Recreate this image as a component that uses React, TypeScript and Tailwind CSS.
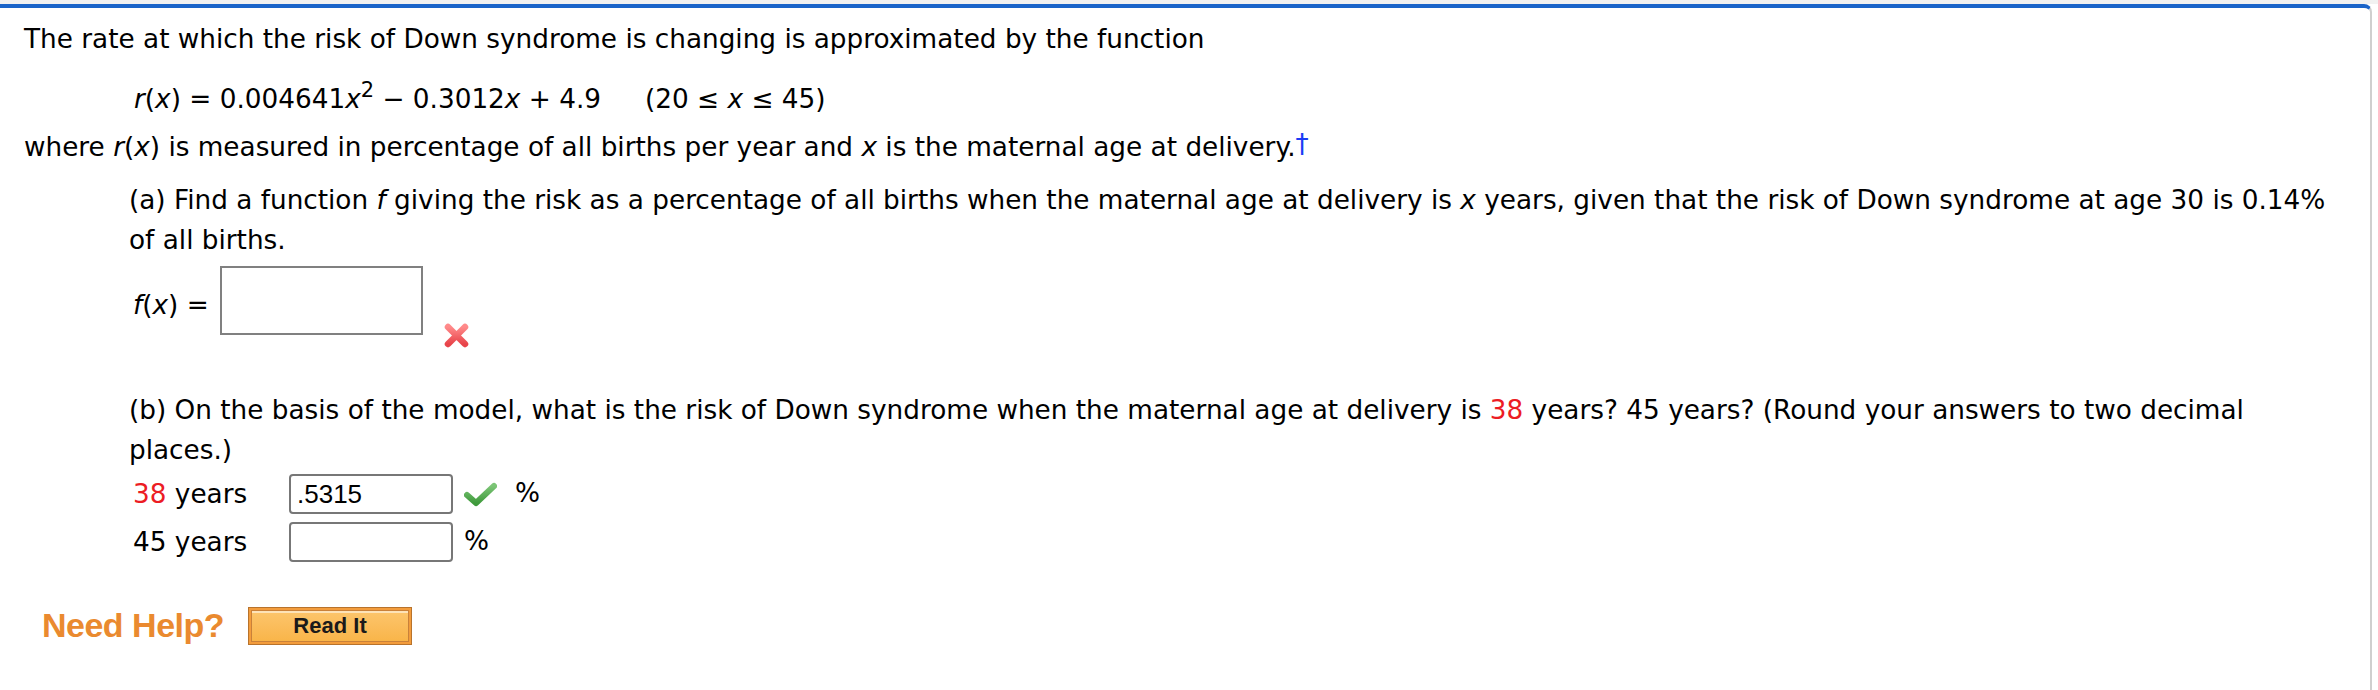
import React from "react";

const serif = "font-['DejaVu_Sans',Verdana,sans-serif]";

function Var({ children }: { children: React.ReactNode }) {
  return <i className="italic">{children}</i>;
}

function WrongMark() {
  return (
    <svg width="27" height="27" viewBox="0 0 27 27" className="shrink-0">
      <defs>
        <linearGradient id="xg" x1="0" y1="0" x2="0" y2="1">
          <stop offset="0" stopColor="#ff8a8a" />
          <stop offset="1" stopColor="#e8444a" />
        </linearGradient>
      </defs>
      <path d="M5 5 L22 22 M22 5 L5 22" stroke="url(#xg)" strokeWidth="6.5" strokeLinecap="round" fill="none" />
    </svg>
  );
}

function RightMark() {
  return (
    <svg width="33" height="26" viewBox="0 0 33 26" className="shrink-0">
      <defs>
        <linearGradient id="cg" x1="0" y1="0" x2="0" y2="1">
          <stop offset="0" stopColor="#7cc576" />
          <stop offset="1" stopColor="#3f9a3c" />
        </linearGradient>
      </defs>
      <path d="M3 14 L12 22 L30 5" stroke="url(#cg)" strokeWidth="6" strokeLinecap="round" strokeLinejoin="round" fill="none" />
    </svg>
  );
}

function AnswerBox({ value }: { value?: string }) {
  return (
    <div className="flex h-[40px] w-[164px] shrink-0 items-center rounded-[4px] border-2 border-[#777] bg-white px-[6px] font-['Liberation_Sans',Arial,sans-serif] text-[26px] text-black">
      {value}
    </div>
  );
}

export default function App() {
  return (
    <div className={`h-[690px] w-[2378px] overflow-hidden bg-white text-black ${serif} text-[26.3px]`}>
      <div className="h-[4px] bg-[#f1f1f1]" />
      <div className="mr-[6px] h-[686px] rounded-tr-[8px] border-t-[4px] border-r-2 border-t-[#1a64c9] border-r-[#cfcfcf] pl-[24px] pt-[11px]">
        <p className="h-[40px] leading-[40px] whitespace-nowrap">
          The rate at which the risk of Down syndrome is changing is approximated by the function
        </p>
        <p className="mt-[20px] h-[40px] pl-[110px] leading-[40px] whitespace-nowrap">
          <Var>r</Var>(<Var>x</Var>) = 0.004641<Var>x</Var>
          <sup className="relative top-[-11px] text-[21px]">2</sup> − 0.3012<Var>x</Var> + 4.9
          <span className="ml-[44px]">
            (20 ≤ <Var>x</Var> ≤ 45)
          </span>
        </p>
        <p className="mt-[8px] h-[40px] leading-[40px] whitespace-nowrap">
          where <Var>r</Var>(<Var>x</Var>) is measured in percentage of all births per year and <Var>x</Var> is the
          maternal age at delivery.
          <span className="relative top-[-3px] text-[#1b3cf5]">†</span>
        </p>

        <div className="pl-[105px]">
          <p className="mt-[13px] leading-[40px] whitespace-nowrap">
            (a) Find a function <Var>f</Var> giving the risk as a percentage of all births when the maternal age at
            delivery is <Var>x</Var> years, given that the risk of Down syndrome at age 30 is 0.14%
            <br />
            of all births.
          </p>
          <div className="mt-[6px] flex items-start">
            <span className="mt-[19px] w-[91px] shrink-0 pl-[4px] leading-[40px]">
              <Var>f</Var>(<Var>x</Var>) =
            </span>
            <div className="h-[69px] w-[203px] shrink-0 border-2 border-[#808080] bg-white" />
            <span className="ml-[20px] mt-[56px]">
              <WrongMark />
            </span>
          </div>

          <p className="mt-[41px] leading-[40px] whitespace-nowrap">
            (b) On the basis of the model, what is the risk of Down syndrome when the maternal age at delivery is{" "}
            <span className="text-[#ec1c24]">38</span> years? 45 years? (Round your answers to two decimal
            <br />
            places.)
          </p>
          <div className="mt-[4px] flex items-center">
            <span className="w-[160px] shrink-0 pl-[4px] leading-[40px]">
              <span className="text-[#ec1c24]">38</span> years
            </span>
            <AnswerBox value=".5315" />
            <span className="ml-[11px]">
              <RightMark />
            </span>
            <span className="ml-[18px]">%</span>
          </div>
          <div className="mt-[8px] flex items-center">
            <span className="w-[160px] shrink-0 pl-[4px] leading-[40px]">45 years</span>
            <AnswerBox />
            <span className="ml-[11px]">%</span>
          </div>
        </div>

        <div className="mt-[38px] flex items-center pl-[18px]">
          <span className="font-['Liberation_Sans',Arial,sans-serif] text-[34px] font-bold tracking-[-0.5px] text-[#ea8a2f]">
            Need Help?
          </span>
          <button className="ml-[24px] h-[38px] w-[164px] border border-[#b8732c] bg-[#f39c3c] p-[2px]">
            <span className="flex h-full w-full items-center justify-center border border-[#c9813a] bg-gradient-to-b from-[#fcc56c] to-[#f9b549] font-['Liberation_Sans',Arial,sans-serif] text-[22px] font-bold text-[#1a1a1a] shadow-[inset_0_2px_0_#fde3b8]">
              Read It
            </span>
          </button>
        </div>
      </div>
    </div>
  );
}
